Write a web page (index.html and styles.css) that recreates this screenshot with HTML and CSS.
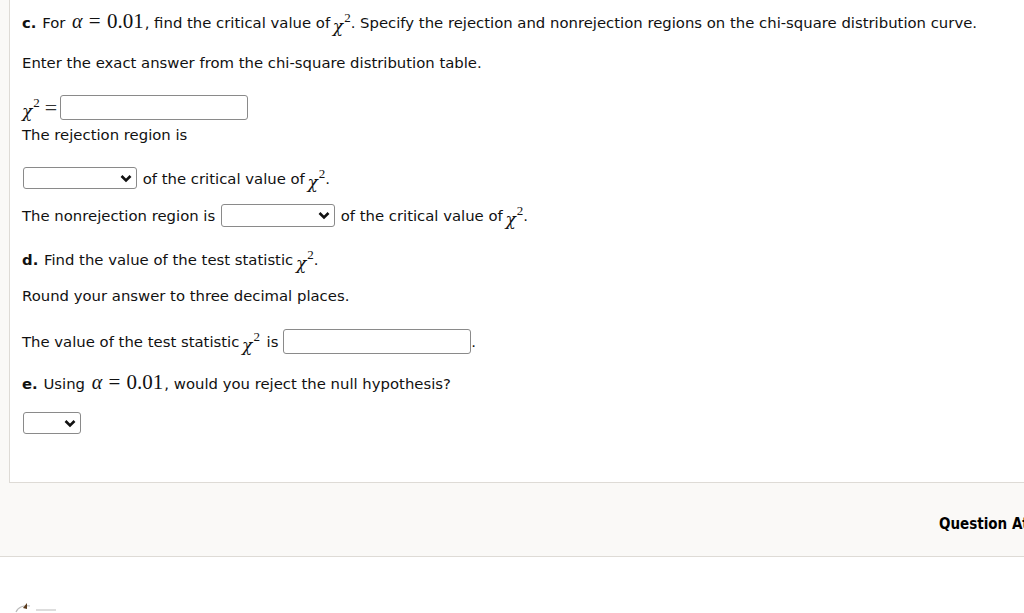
FILE: index.html
```html
<!doctype html>
<html>
<head>
<meta charset="utf-8">
<title>Question</title>
<link rel="stylesheet" href="styles.css">
</head>
<body>
<div class="page">
	<div class="main">
		<p class="line first"><b>c.</b> For <span class="m"><i>α</i> = 0.01</span>, find the critical value of <span class="chi"><i>χ</i><sup>2</sup></span>. Specify the rejection and nonrejection regions on the chi-square distribution curve.</p>
		<p class="line l2">Enter the exact answer from the chi-square distribution table.</p>
		<div class="line eq"><span class="chi big"><i>χ</i><sup>2</sup></span><span class="m eqsign">=</span><input class="box" type="text"></div>
		<p class="line l4">The rejection region is</p>
		<div class="line sel1"><span class="drop"><svg width="12" height="9" viewBox="0 0 12 9"><path d="M1.5 2 L6 6.5 L10.5 2" fill="none" stroke="#111" stroke-width="2.6"/></svg></span> of the critical value of <span class="chi"><i>χ</i><sup>2</sup></span>.</div>
		<div class="line sel2">The nonrejection region is <span class="drop"><svg width="12" height="9" viewBox="0 0 12 9"><path d="M1.5 2 L6 6.5 L10.5 2" fill="none" stroke="#111" stroke-width="2.6"/></svg></span> of the critical value of <span class="chi"><i>χ</i><sup>2</sup></span>.</div>
		<p class="line d"><b>d.</b> Find the value of the test statistic <span class="chi"><i>χ</i><sup>2</sup></span>.</p>
		<p class="line round">Round your answer to three decimal places.</p>
		<div class="line val">The value of the test statistic <span class="chi"><i>χ</i><sup>2</sup></span> is <input class="box" type="text">.</div>
		<p class="line e"><b>e.</b> Using <span class="m"><i>α</i> = 0.01</span>, would you reject the null hypothesis?</p>
		<div class="line sel3"><span class="drop small"><svg width="12" height="9" viewBox="0 0 12 9"><path d="M1.5 2 L6 6.5 L10.5 2" fill="none" stroke="#111" stroke-width="2.6"/></svg></span></div>
	</div>
	<div class="footer"><span class="attempt">Question Attempt: 1 of 1</span></div>
	<div class="bottom">
		<svg width="60" height="14" viewBox="0 0 60 14"><path d="M8 13 C10 8 16 6 22 7" fill="none" stroke="#bbb" stroke-width="1.2"/><path d="M15 9 L19 4 L19 10 Z" fill="#5a3a1c"/><path d="M28 11 h20" stroke="#ddd" stroke-width="2"/></svg>
	</div>
</div>
</body>
</html>
```

FILE: styles.css
```css
*{ margin:0; padding:0; box-sizing:border-box;}
html,body{ overflow:hidden;}
body{ background:#faf9f7; font-family:"DejaVu Sans",Verdana,sans-serif; font-size:14.85px; color:#111;}

.page{ width:1024px; height:613px;}
.main{ margin-left:9px; height:483px; background:#fff; border-left:1px solid #dedbd6; border-bottom:1px solid #dedbd6; padding:11px 0 0 12px;}

.line{ white-space:nowrap; height:20px; line-height:20px;}
.line b{ margin-right:1px;}
.l2{ margin-top:22px;}
.eq{ margin-top:22px; height:25px; line-height:25px;}
.l4{ margin-top:5px; height:20px;}
.sel1{ margin-top:22px; height:22px; line-height:22px;}
.sel2{ margin-top:15px; height:23px; line-height:23px;}
.d{ margin-top:22px;}
.round{ margin-top:17px;}
.val{ margin-top:23px; height:25px; line-height:25px;}
.e{ margin-top:18px;}
.sel3{ margin-top:20px; height:22px; line-height:22px;}

.m{ font-family:"Liberation Serif","DejaVu Serif",serif; font-size:21px; margin:0 1px 0 2px; word-spacing:1px;}
.m i{ font-size:20px;}
.chi{ font-family:"DejaVu Serif","Liberation Serif",serif; font-size:17px; margin-left:-2px; position:relative; top:4px;}
.chi sup{ font-family:"Liberation Serif",serif; font-style:normal; font-size:13px; position:relative; top:-3px; vertical-align:super; line-height:0; margin-left:1px;}
.chi.big{ margin-left:0;}
.val .chi{ margin-right:2px;}
.eqsign{ display:inline-block; width:15px; margin:0 0 0 5px; color:#333; font-size:22px; vertical-align:top;}

.box{ height:25px; width:188px; border:1px solid #8a8a8a; border-radius:3px; background:#fff; vertical-align:top;}

.drop{ display:inline-flex; align-items:center; justify-content:flex-end; width:114px; height:22px; border:1px solid #8a8a8a; border-radius:3px; background:#fff; padding-right:4px; margin:0 1px 0 1px; vertical-align:top;}
.sel2 .drop{ height:23px; margin-left:1px;}
.drop.small{ width:58px;}

.footer{ height:74px; border-bottom:1px solid #dedbd6; padding-left:939px; display:flex; align-items:center; padding-top:9px; overflow:hidden; white-space:nowrap;}
.attempt{ font-family:"DejaVu Sans Condensed","DejaVu Sans",sans-serif; font-stretch:condensed; font-weight:bold; font-size:15px; color:#000;}
.bottom{ background:#fff; height:56px; padding:42px 0 0 8px;}
```
